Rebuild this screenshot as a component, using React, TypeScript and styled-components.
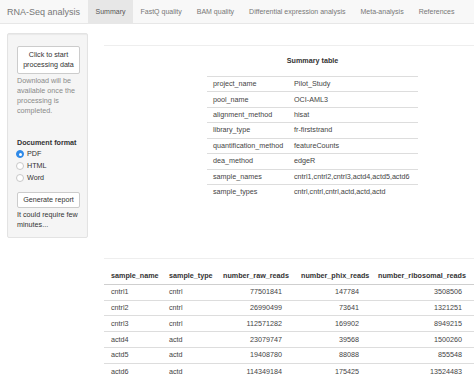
import React from "react";
import styled, { createGlobalStyle } from "styled-components";

const GlobalStyle = createGlobalStyle`
  html, body {
    margin: 0;
    padding: 0;
    background: #ffffff;
    font-family: "Liberation Sans", Arial, Helvetica, sans-serif;
    color: #333333;
  }
`;

const NavBar = styled.div`
  display: flex;
  align-items: stretch;
  height: 24px;
  padding-left: 7px;
  background: #f8f8f8;
  border-bottom: 1px solid #e7e7e7;
  box-sizing: border-box;
`;

const Brand = styled.div`
  font-size: 9px;
  line-height: 24px;
  color: #777777;
  margin-right: 8px;
  white-space: nowrap;
`;

const Tab = styled.div<{ $active?: boolean }>`
  font-size: 7px;
  line-height: 23px;
  padding: 0 7.5px;
  white-space: nowrap;
  color: ${({ $active }) => ($active ? "#555555" : "#777777")};
  background: ${({ $active }) => ($active ? "#e7e7e7" : "transparent")};
`;

const Body = styled.div`
  display: flex;
  align-items: flex-start;
  padding-left: 7px;
  gap: 16px;
`;

const Well = styled.div`
  width: 81px;
  box-sizing: border-box;
  margin-top: 9px;
  padding: 12px 7px 7px 9px;
  background: #f5f5f5;
  border: 1px solid #e3e3e3;
  border-radius: 2px;
  box-shadow: inset 0 1px 1px rgba(0, 0, 0, 0.05);
  font-size: 7.2px;
  line-height: 10px;
`;

const Button = styled.div<{ $pad: number; $gap?: number }>`
  box-sizing: border-box;
  width: 63px;
  margin-top: ${({ $gap }) => $gap ?? 0}px;
  padding: ${({ $pad }) => $pad}px 3px;
  background: #ffffff;
  border: 1px solid #cccccc;
  border-radius: 2px;
  color: #333333;
  text-align: center;
`;

const HelpText = styled.div`
  margin-top: 2px;
  color: #8a8a8a;
`;

const Note = styled.div`
  margin-top: 2px;
  color: #333333;
`;

const FieldLabel = styled.div`
  margin-top: 22px;
  font-weight: bold;
  color: #333333;
`;

const RadioRow = styled.div`
  display: flex;
  align-items: center;
  height: 12px;
  gap: 3px;
  color: #333333;
`;

const RadioDot = styled.span<{ $on?: boolean }>`
  box-sizing: border-box;
  width: 8px;
  height: 8px;
  border-radius: 50%;
  margin-left: -1px;
  background: ${({ $on }) => ($on ? "#2f8ae8" : "#ffffff")};
  border: 1px solid ${({ $on }) => ($on ? "#2f8ae8" : "#c8c8c8")};
  display: flex;
  align-items: center;
  justify-content: center;
  &::after {
    content: "";
    width: 3px;
    height: 3px;
    border-radius: 50%;
    background: ${({ $on }) => ($on ? "#ffffff" : "transparent")};
  }
`;

const Main = styled.div`
  flex: 1;
  padding-top: 21px;
  min-width: 0;
`;

const Rule = styled.div<{ $top: number }>`
  height: 1px;
  margin-top: ${({ $top }) => $top}px;
  background: #eeeeee;
`;

const SummaryBox = styled.div`
  margin-left: 103px;
  width: 211px;
`;

const Caption = styled.div`
  padding: 10px 0;
  font-size: 7.2px;
  line-height: 10px;
  font-weight: bold;
  text-align: center;
  color: #333333;
`;

const Table = styled.table<{ $full?: boolean }>`
  border-collapse: collapse;
  table-layout: fixed;
  width: ${({ $full }) => ($full ? "100%" : "211px")};
  font-size: 7.2px;
  line-height: 10px;
`;

const Col = styled.col<{ $w: number }>`
  width: ${({ $w }) => $w}px;
`;

const Row = styled.tr<{ $h: number }>`
  height: ${({ $h }) => $h}px;
`;

const Cell = styled.td<{ $num?: boolean }>`
  padding: 0 ${({ $num }) => ($num ? "12px" : "6px")} 0 7px;
  border-top: 1px solid #dddddd;
  color: #444444;
  white-space: nowrap;
  vertical-align: middle;
  text-align: ${({ $num }) => ($num ? "right" : "left")};
`;

const KeyCell = styled(Cell)`
  padding-left: 6px;
`;

const HeadCell = styled.th`
  padding: 3px 4px 3px 7px;
  border-bottom: 1px solid #cfcfcf;
  font-weight: bold;
  color: #333333;
  text-align: left;
  white-space: nowrap;
`;

const SampleTable = styled(Table)`
  margin-top: 9px;
`;

const summary: [string, string][] = [
  ["project_name", "Pilot_Study"],
  ["pool_name", "OCI-AML3"],
  ["alignment_method", "hisat"],
  ["library_type", "fr-firststrand"],
  ["quantification_method", "featureCounts"],
  ["dea_method", "edgeR"],
  ["sample_names", "cntrl1,cntrl2,cntrl3,actd4,actd5,actd6"],
  ["sample_types", "cntrl,cntrl,cntrl,actd,actd,actd"],
];

const samples = [
  ["cntrl1", "cntrl", "77501841", "147784", "3508506"],
  ["cntrl2", "cntrl", "26990499", "73641", "1321251"],
  ["cntrl3", "cntrl", "112571282", "169902", "8949215"],
  ["actd4", "actd", "23079747", "39568", "1500260"],
  ["actd5", "actd", "19408780", "88088", "855548"],
  ["actd6", "actd", "114349184", "175425", "13524483"],
];

const tabs = [
  "Summary",
  "FastQ quality",
  "BAM quality",
  "Differential expression analysis",
  "Meta-analysis",
  "References",
];

export default function App() {
  return (
    <>
      <GlobalStyle />
      <NavBar>
        <Brand>RNA-Seq analysis</Brand>
        {tabs.map((t, i) => (
          <Tab key={t} $active={i === 0}>
            {t}
          </Tab>
        ))}
      </NavBar>
      <Body>
        <Well>
          <Button $pad={3}>
            Click to start
            <br />
            processing data
          </Button>
          <HelpText>
            Download will be available once the processing is completed.
          </HelpText>
          <FieldLabel>Document format</FieldLabel>
          <RadioRow>
            <RadioDot $on />
            PDF
          </RadioRow>
          <RadioRow>
            <RadioDot />
            HTML
          </RadioRow>
          <RadioRow>
            <RadioDot />
            Word
          </RadioRow>
          <Button $pad={2} $gap={8}>
            Generate report
          </Button>
          <Note>It could require few minutes...</Note>
        </Well>
        <Main>
          <Rule $top={0} />
          <SummaryBox>
            <Caption>Summary table</Caption>
            <Table>
              <colgroup>
                <Col $w={81} />
                <Col $w={130} />
              </colgroup>
              <tbody>
                {summary.map(([k, v]) => (
                  <Row key={k} $h={15.43}>
                    <KeyCell>{k}</KeyCell>
                    <KeyCell>{v}</KeyCell>
                  </Row>
                ))}
              </tbody>
            </Table>
          </SummaryBox>
          <Rule $top={58} />
          <SampleTable $full>
            <colgroup>
              <Col $w={58} />
              <Col $w={54} />
              <Col $w={78} />
              <Col $w={77} />
              <Col $w={103} />
            </colgroup>
            <thead>
              <tr>
                <HeadCell>sample_name</HeadCell>
                <HeadCell>sample_type</HeadCell>
                <HeadCell>number_raw_reads</HeadCell>
                <HeadCell>number_phix_reads</HeadCell>
                <HeadCell>number_ribosomal_reads</HeadCell>
              </tr>
            </thead>
            <tbody>
              {samples.map((r) => (
                <Row key={r[0]} $h={15.8}>
                  {r.map((c, j) => (
                    <Cell key={j} $num={j > 1}>
                      {c}
                    </Cell>
                  ))}
                </Row>
              ))}
            </tbody>
          </SampleTable>
        </Main>
      </Body>
    </>
  );
}
